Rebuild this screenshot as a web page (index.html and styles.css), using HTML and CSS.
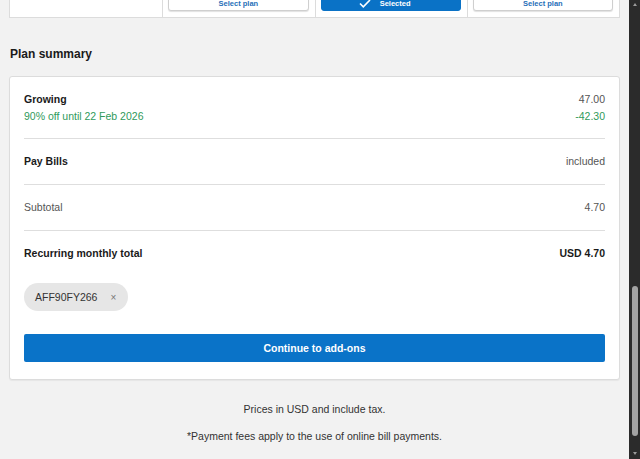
FILE: index.html
```html
<!DOCTYPE html>
<html lang="en">
<head>
<meta charset="utf-8">
<title>Plan summary</title>
<link rel="stylesheet" href="styles.css">
</head>
<body>
<div class="page">
  <main class="content">
    <div class="plans">
      <div class="plan-col plan-col-empty"></div>
      <div class="plan-col"><button class="plan-btn">Select plan</button></div>
      <div class="plan-col"><button class="plan-btn plan-btn-selected"><svg class="check" viewBox="0 0 12 9" width="12" height="9"><path d="M1 4.5 L4.3 7.8 L11 1" fill="none" stroke="#ffffff" stroke-width="1.6"/></svg>Selected</button></div>
      <div class="plan-col"><button class="plan-btn">Select plan</button></div>
    </div>

    <h2 class="title">Plan summary</h2>

    <section class="summary">
      <div class="row row-first">
        <div class="cell">
          <div class="label-strong">Growing</div>
          <div class="discount">90% off until 22 Feb 2026</div>
        </div>
        <div class="cell cell-right">
          <div class="value">47.00</div>
          <div class="discount">-42.30</div>
        </div>
      </div>
      <div class="row">
        <div class="label-strong">Pay Bills</div>
        <div class="value">included</div>
      </div>
      <div class="row">
        <div class="label">Subtotal</div>
        <div class="value">4.70</div>
      </div>
      <div class="row row-last">
        <div class="label-strong">Recurring monthly total</div>
        <div class="value-strong">USD 4.70</div>
      </div>
      <div class="chip-line">
        <span class="chip">AFF90FY266<span class="chip-x">×</span></span>
      </div>
      <button class="continue">Continue to add-ons</button>
    </section>

    <p class="note note-first">Prices in USD and include tax.</p>
    <p class="note">*Payment fees apply to the use of online bill payments.</p>
  </main>

  <div class="scrollbar">
    <span class="arrow arrow-up"></span>
    <div class="track"><div class="thumb"></div></div>
    <span class="arrow arrow-down"></span>
  </div>
</div>
</body>
</html>
```

FILE: styles.css
```css
html, body {
  margin: 0;
  padding: 0;
  height: 100%;
  overflow: hidden;
}

body {
  background: #f2f2f2;
  font-family: "Liberation Sans", Arial, sans-serif;
  font-size: 10.5px;
  color: #1a1a1a;
}

.page {
  display: flex;
  height: 459px;
}

.content {
  flex: 1;
  padding: 0 9px;
  min-width: 0;
}

/* top plan table (cut off) */
.plans {
  display: grid;
  grid-template-columns: repeat(4, 1fr);
  background: #ffffff;
  border: 1px solid #dcdcdc;
  border-top: none;
  margin-top: -5px;
}

.plan-col {
  padding: 0 6px 6px 5px;
  border-left: 1px solid #dcdcdc;
}

.plan-col-empty {
  border-left: none;
}

.plan-btn {
  display: flex;
  align-items: center;
  justify-content: center;
  gap: 9px;
  width: 100%;
  height: 16px;
  margin: 0;
  padding: 0;
  border: 1px solid #cfcfcf;
  border-radius: 3px;
  background: #ffffff;
  box-shadow: 0 1px 1px rgba(0, 0, 0, 0.12);
  font-family: "Liberation Sans", Arial, sans-serif;
  font-size: 7.5px;
  font-weight: bold;
  color: #1f6fb8;
}

.plan-btn-selected {
  background: #0a72c6;
  border-color: #0a72c6;
  color: #ffffff;
  box-shadow: none;
  padding-right: 12px;
}

.check {
  display: block;
}

.title {
  margin: 28px 0 14px 1px;
  font-size: 12px;
  line-height: 16px;
  font-weight: bold;
  color: #1a1a1a;
}

/* summary card */
.summary {
  background: #ffffff;
  border: 1px solid #dcdcdc;
  border-radius: 3px;
  box-shadow: 0 1px 1px rgba(0, 0, 0, 0.05);
  padding: 0 14px 17px;
}

.row {
  display: flex;
  justify-content: space-between;
  align-items: flex-start;
  padding: 14px 0;
  line-height: 17px;
  border-bottom: 1px solid #dedede;
}

.row-first {
  padding-top: 14px;
  padding-bottom: 13px;
}

.row-last {
  border-bottom: none;
}

.cell-right {
  text-align: right;
}

.label-strong {
  font-weight: bold;
  color: #1a1a1a;
}

.label {
  color: #555555;
}

.value {
  color: #555555;
}

.value-strong {
  font-weight: bold;
  color: #1a1a1a;
}

.discount {
  color: #2f9a5b;
}

.chip-line {
  display: flex;
  margin-top: 7px;
}

.chip {
  display: inline-flex;
  align-items: center;
  height: 28px;
  padding: 0 12px 0 11px;
  border-radius: 14px;
  background: #e6e6e6;
  color: #333333;
  font-size: 10.5px;
}

.chip-x {
  margin-left: 13px;
  font-size: 10px;
  color: #777777;
}

.continue {
  display: block;
  width: 100%;
  height: 28px;
  margin: 23px 0 0;
  padding: 0;
  border: none;
  border-radius: 2px;
  background: #0a73c8;
  color: #ffffff;
  font-family: "Liberation Sans", Arial, sans-serif;
  font-size: 10.5px;
  font-weight: bold;
}

.note {
  margin: 11px 0 0;
  text-align: center;
  line-height: 16px;
  color: #333333;
}

.note-first {
  margin-top: 21px;
}

/* scrollbar chrome */
.scrollbar {
  width: 11px;
  flex: none;
  background: #2b2b2b;
  display: flex;
  flex-direction: column;
  align-items: center;
}

.arrow {
  width: 0;
  height: 0;
  border-left: 2.5px solid transparent;
  border-right: 2.5px solid transparent;
}

.arrow-up {
  margin-top: 3px;
  border-bottom: 3px solid #9a9a9a;
}

.arrow-down {
  margin-bottom: 4px;
  border-top: 3px solid #9a9a9a;
}

.track {
  flex: 1;
  display: flex;
  flex-direction: column;
  justify-content: flex-end;
  width: 100%;
  align-items: center;
}

.thumb {
  width: 6px;
  height: 150px;
  margin-bottom: 16px;
  border-radius: 3px;
  background: #a3a3a3;
}
```
